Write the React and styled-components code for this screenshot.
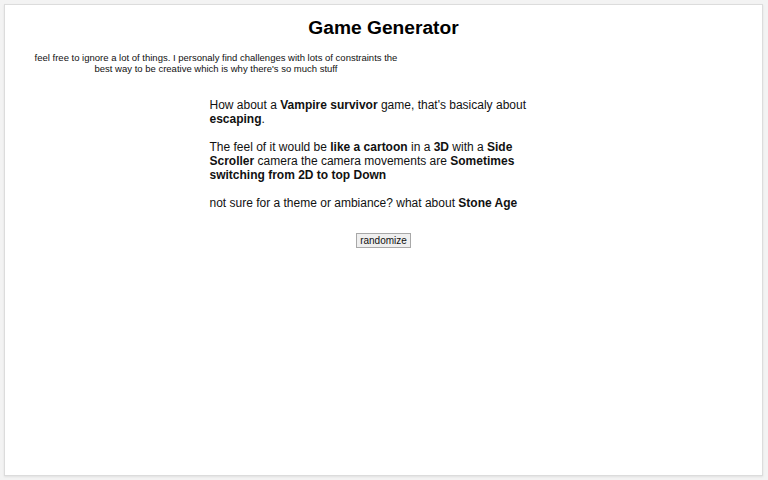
import React from "react";
import styled, { createGlobalStyle } from "styled-components";

const Global = createGlobalStyle`
  html, body { margin: 0; padding: 0; background: #f3f3f3; }
  body { font-family: "Liberation Sans", Arial, sans-serif; color: #111; }
  #root { padding: 4px 5px 4px 4px; height: 480px; box-sizing: border-box; }
`;

const Card = styled.main`
  background: #fff;
  border: 1px solid #dcdcdc;
  box-shadow: 0 1px 2px rgba(0, 0, 0, 0.08);
  height: 100%;
  box-sizing: border-box;
  display: flex;
  flex-direction: column;
  align-items: center;
  padding-top: 11px;
`;

const Title = styled.h1`
  margin: 0;
  font-size: 19.2px;
  font-weight: bold;
  line-height: 24px;
  color: #000;
`;

const Note = styled.p`
  align-self: flex-start;
  margin: 12px 0 0 26px;
  width: 370px;
  font-size: 9.5px;
  line-height: 11px;
  text-align: center;
`;

const Idea = styled.section`
  width: 348px;
  margin-top: 24px;
  font-size: 12px;
  line-height: 14px;
  color: #111;
`;

const Para = styled.p`
  margin: 0 0 14px;
  b { font-weight: bold; }
`;

const Button = styled.button`
  margin-top: 9px;
  font-family: "Liberation Sans", Arial, sans-serif;
  font-size: 10px;
  line-height: 11px;
  padding: 1px 3px;
  background: #efefef;
  border: 1px solid #a8a8a8;
  border-radius: 0;
  color: #111;
`;

export default function App() {
  return (
    <>
      <Global />
      <Card>
        <Title>Game Generator</Title>
        <Note>
          feel free to ignore a lot of things. I personaly find challenges with lots of constraints the
          best way to be creative which is why there's so much stuff
        </Note>
        <Idea>
          <Para>
            How about a <b>Vampire survivor</b> game, that's basicaly about <b>escaping</b>.
          </Para>
          <Para>
            The feel of it would be <b>like a cartoon</b> in a <b>3D</b> with a <b>Side Scroller</b> camera
            the camera movements are <b>Sometimes switching from 2D to top Down</b>
          </Para>
          <Para>
            not sure for a theme or ambiance? what about <b>Stone Age</b>
          </Para>
        </Idea>
        <Button type="button">randomize</Button>
      </Card>
    </>
  );
}
